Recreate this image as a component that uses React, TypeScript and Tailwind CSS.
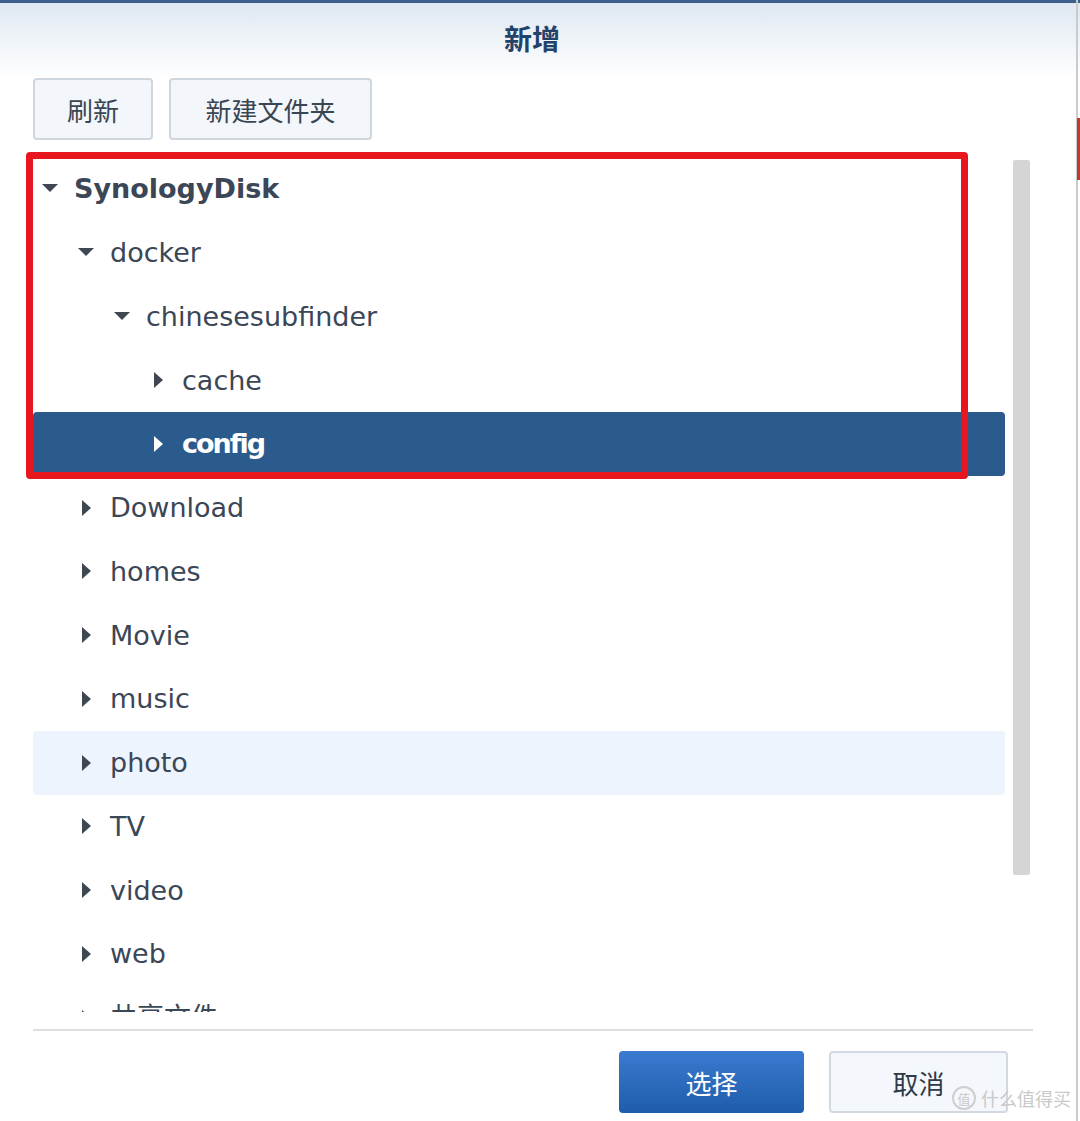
import React from "react";

type Row = { label: string; level: number; open?: boolean; bold?: boolean; state?: "sel" | "hover" };

const rows: Row[] = [
  { label: "SynologyDisk", level: 0, open: true, bold: true },
  { label: "docker", level: 1, open: true },
  { label: "chinesesubfinder", level: 2, open: true },
  { label: "cache", level: 3 },
  { label: "config", level: 3, state: "sel" },
  { label: "Download", level: 1 },
  { label: "homes", level: 1 },
  { label: "Movie", level: 1 },
  { label: "music", level: 1 },
  { label: "photo", level: 1, state: "hover" },
  { label: "TV", level: 1 },
  { label: "video", level: 1 },
  { label: "web", level: 1 },
  { label: "共享文件", level: 1 },
];

const indents = ["pl-[9px]", "pl-[45px]", "pl-[81px]", "pl-[117px]"];

function Caret({ open, light }: { open?: boolean; light?: boolean }) {
  const c = light ? "#ffffff" : "#3f4752";
  return (
    <span className="w-[16px] h-[16px] flex items-center justify-center shrink-0">
      {open ? (
        <svg width="16" height="9" viewBox="0 0 16 9">
          <polygon points="0,0 16,0 8,8" fill={c} />
        </svg>
      ) : (
        <svg width="9" height="16" viewBox="0 0 9 16">
          <polygon points="0,0 9,8 0,16" fill={c} />
        </svg>
      )}
    </span>
  );
}

export default function App() {
  return (
    <div className="relative w-[1080px] h-[1121px] overflow-hidden bg-white font-['DejaVu_Sans','Noto_Sans_CJK_SC',sans-serif]">
      <div className="h-[3px] bg-[#3b5f8c]" />
      <div className="h-[75px] bg-gradient-to-b from-[#dfe8f1] to-white flex items-center justify-center pr-[16px]">
        <span className="text-[28px] font-bold text-[#23426a] font-['Noto_Sans_CJK_SC',sans-serif] leading-none -mt-[6px]">新增</span>
      </div>
      <div className="flex gap-4 px-[33px]">
        <button className="w-[120px] h-[62px] rounded-[4px] border-2 border-[#cfd6de] bg-[#f3f6fa] text-[26px] text-[#3a4552] font-['Noto_Sans_CJK_SC',sans-serif] flex items-center justify-center">
          刷新
        </button>
        <button className="w-[203px] h-[62px] rounded-[4px] border-2 border-[#cfd6de] bg-[#f3f6fa] text-[26px] text-[#3a4552] font-['Noto_Sans_CJK_SC',sans-serif] flex items-center justify-center">
          新建文件夹
        </button>
      </div>

      <div className="relative mt-[12px] pt-[5px] h-[860px] flex pl-[33px] overflow-hidden">
        <div className="w-[972px] flex flex-col">
          {rows.map((r, i) => (
            <div
              key={i}
              className={
                "h-[63.75px] shrink-0 flex items-center gap-4 rounded-[4px] " +
                indents[r.level] +
                (r.state === "sel" ? " bg-[#2b5a8c]" : r.state === "hover" ? " bg-[#edf4fd]" : "")
              }
            >
              <Caret open={r.open} light={r.state === "sel"} />
              <span
                className={
                  "text-[27px] leading-none whitespace-nowrap " +
                  (r.bold
                    ? "font-bold tracking-[0px] text-[#3b4656]"
                    : r.state === "sel"
                    ? "text-white font-bold tracking-[-2px]"
                    : "text-[#3b4656]")
                }
              >
                {r.label}
              </span>
            </div>
          ))}
        </div>
        <div className="ml-[8px] pt-[3px]">
          <div className="w-[17px] h-[715px] bg-[#d3d5d7] rounded-[2px]" />
        </div>
        <div className="absolute left-[26px] top-0 w-[942px] h-[327px] border-[7px] border-[#e8161e] rounded-[4px]" />
      </div>

      <div className="mt-[17px] ml-[33px] w-[1000px] h-[2px] bg-[#dcdee0]" />

      <div className="mt-[20px] flex justify-end gap-[25px] pr-[72px]">
        <button className="w-[185px] h-[62px] rounded-[4px] bg-gradient-to-b from-[#3a7bd0] to-[#1e5cab] text-white text-[26px] font-['Noto_Sans_CJK_SC',sans-serif] flex items-center justify-center">
          选择
        </button>
        <button className="w-[179px] h-[62px] rounded-[4px] border-2 border-[#d3d9e0] bg-[#f4f7fb] text-[#2f3a46] text-[26px] font-['Noto_Sans_CJK_SC',sans-serif] flex items-center justify-center">
          取消
        </button>
      </div>

      <div className="absolute left-[1076px] top-0 w-[2px] h-full bg-[#c9cbce]" />
      <div className="absolute left-[1077px] top-[118px] w-[3px] h-[62px] bg-[#c0392b]" />

      <div className="absolute left-[952px] top-[1086px] flex items-center gap-[5px] whitespace-nowrap text-[#c9c9c9] font-['Noto_Sans_CJK_SC',sans-serif]">
        <span className="w-[24px] h-[24px] rounded-full border-2 border-[#cfcfcf] flex items-center justify-center text-[13px] leading-none">值</span>
        <span className="text-[18px] leading-none">什么值得买</span>
      </div>
    </div>
  );
}
